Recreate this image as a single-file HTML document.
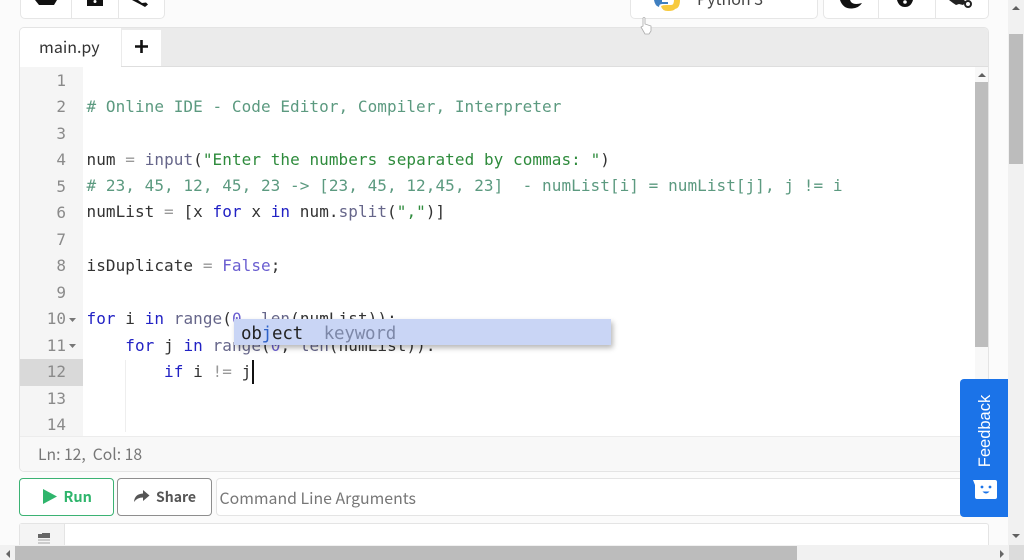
<!DOCTYPE html>
<html><head><meta charset="utf-8">
<style>
html,body{margin:0;padding:0;width:1024px;height:560px;overflow:hidden;background:#fbfbfb}
*{box-sizing:border-box}
.box{position:absolute;background:#fff;border:1px solid #e6e6e6;border-radius:5px}
.sans{font-family:"Noto Sans CJK JP","Liberation Sans",sans-serif}
.ln{position:absolute;width:46px;left:20px;text-align:right;font:16px/26px "DejaVu Sans Mono","Liberation Mono",monospace;color:#8a8a8a;letter-spacing:-.03px}
.cl{position:absolute;left:86.500px;white-space:pre;font:16px/26px "DejaVu Sans Mono","Liberation Mono",monospace;color:#333;letter-spacing:.06px}
.c{color:#5c9a80}.k{color:#2222c4}.s{color:#2e8b3c}.f{color:#66668a}.b{color:#6a5ed0}.o{color:#999}
</style></head><body>
<!-- top toolbar left -->
<div class="box" style="left:20px;top:-20px;width:145px;height:39px"></div>
<div style="position:absolute;left:71px;top:0;width:1px;height:18px;background:#e6e6e6"></div>
<div style="position:absolute;left:118px;top:0;width:1px;height:18px;background:#e6e6e6"></div>
<svg style="position:absolute;left:30px;top:0" width="130" height="10"><path d="M5 0H27L24 5H9Z" fill="#111"/><path d="M57 0H73V6H57Z" fill="#111"/><circle cx="65" cy="1.500" r="1.500" fill="#fff"/><path d="M102 0H108L112 3L116 2.500L118 4.500L115 7L111.500 5Z" fill="#111"/></svg>
<!-- top right -->
<div class="box" style="left:630px;top:-20px;width:188px;height:39px"></div>
<div class="sans" style="position:absolute;left:697px;top:-12px;font-size:16px;line-height:20px;color:#444">Python 3</div>
<svg style="position:absolute;left:654px;top:0" width="28" height="12"><path d="M0 0H8V2H14V4H8Q5 4 5 7Q1 6 0 0Z" fill="#3f7fc0"/><path d="M7 6Q9 5 12 5H17Q20 5 20 0H26Q26 8 21 9Q20 11 14 11Q8 11 7 6Z" fill="#f7ca3e"/></svg>
<div class="box" style="left:823px;top:-20px;width:166px;height:39px"></div>
<div style="position:absolute;left:878px;top:0;width:1px;height:18px;background:#e6e6e6"></div>
<div style="position:absolute;left:935px;top:0;width:1px;height:18px;background:#e6e6e6"></div>
<svg style="position:absolute;left:838px;top:0" width="140" height="12"><path d="M2 0Q5 9 14 8.500 21 8 24 3 14 6 12 0Z" fill="#111"/><path d="M59 0H75Q73 7 67 7 61 7 59 0Z" fill="#111"/><circle cx="67" cy="2" r="1.800" fill="#fff"/><path d="M111 0H126L128 2L125 5L121 4L118 5L115 3Z" fill="#222"/><circle cx="130" cy="4" r="3" fill="none" stroke="#222" stroke-width="2"/></svg>
<!-- scrollbar outer -->
<div style="position:absolute;left:1008px;top:0;width:16px;height:545px;background:#f1f1f1"></div>
<div style="position:absolute;left:1009px;top:34px;width:14px;height:130px;background:#bcbcbc"></div>
<svg style="position:absolute;left:1008px;top:3px" width="16" height="10"><path d="M4 7L8 3L12 7Z" fill="#606060"/></svg>
<svg style="position:absolute;left:1008px;top:531px" width="16" height="10"><path d="M4 3L8 7L12 3Z" fill="#606060"/></svg>
<!-- editor card -->
<div style="position:absolute;left:19px;top:27px;width:970px;height:445px;background:#fff;border:1px solid #e4e4e4;border-radius:5px;overflow:hidden">
  <div style="position:absolute;left:0;top:0;width:970px;height:39px;background:#ebebeb;border-bottom:1px solid #dedede"></div>
  <div style="position:absolute;left:0;top:0;width:101px;height:40px;background:#fff"></div>
  <div style="position:absolute;left:102px;top:2px;width:39px;height:36px;background:#fff"></div>
  <div style="position:absolute;left:0;top:39px;width:63px;height:369px;background:#f5f5f5"></div>
  <div style="position:absolute;left:0;top:331px;width:63px;height:27px;background:#d9d9d9"></div>
  <div style="position:absolute;left:0;top:408px;width:970px;height:37px;background:#f8f8f8;border-top:1px solid #ececec"></div>
  <div style="position:absolute;left:955px;top:39px;width:14px;height:369px;background:#f8f8f8"></div>
  <div style="position:absolute;left:955px;top:54px;width:13px;height:265px;background:#bdbdbd"></div>
  <svg style="position:absolute;left:954px;top:42px" width="16" height="10"><path d="M4 7L8 3L12 7Z" fill="#606060"/></svg>
</div>
<div class="sans" style="position:absolute;left:39px;top:35px;font-size:16px;line-height:22px;color:#333">main.py</div>
<svg style="position:absolute;left:134px;top:39px" width="15" height="15"><path d="M7.500 1V14M1 7.500H14" stroke="#111" stroke-width="2.600"/></svg>
<!-- gutter -->
<div class="ln" style="top:68px">1</div>
<div class="ln" style="top:94px">2</div>
<div class="ln" style="top:121px">3</div>
<div class="ln" style="top:147px">4</div>
<div class="ln" style="top:174px">5</div>
<div class="ln" style="top:200px">6</div>
<div class="ln" style="top:227px">7</div>
<div class="ln" style="top:253px">8</div>
<div class="ln" style="top:280px">9</div>
<div class="ln" style="top:306px">10</div>
<div class="ln" style="top:333px">11</div>
<div class="ln" style="top:359px">12</div>
<div class="ln" style="top:386px">13</div>
<div class="ln" style="top:412px">14</div>
<svg style="position:absolute;left:68px;top:316px" width="10" height="36"><path d="M1 2H8L4.500 6ZM1 28H8L4.500 32Z" fill="#777"/></svg>
<!-- code -->
<div class="cl c" style="top:94px"># Online IDE - Code Editor, Compiler, Interpreter</div>
<div class="cl" style="top:147px">num <span class="o">=</span> <span class="f">input</span>(<span class="s">"Enter the numbers separated by commas: "</span>)</div>
<div class="cl c" style="top:173px"># 23, 45, 12, 45, 23 -&gt; [23, 45, 12,45, 23]  - numList[i] = numList[j], j != i</div>
<div class="cl" style="top:199px">numList <span class="o">=</span> [x <span class="k">for</span> x <span class="k">in</span> num.<span class="f">split</span>(<span class="s">","</span>)]</div>
<div class="cl" style="top:253px">isDuplicate <span class="o">=</span> <span class="b">False</span>;</div>
<div class="cl" style="top:306px"><span class="k">for</span> i <span class="k">in</span> <span class="f">range</span>(<span class="b">0</span>, <span class="f">len</span>(numList)):</div>
<div class="cl" style="top:333px">    <span class="k">for</span> j <span class="k">in</span> <span class="f">range</span>(<span class="b">0</span>, <span class="f">len</span>(numList)):</div>
<div class="cl" style="top:359px">        <span class="k">if</span> i <span class="o">!=</span> j</div>
<div style="position:absolute;left:252px;top:360px;width:2px;height:24px;background:#111"></div>
<div style="position:absolute;left:125px;top:360px;width:1px;height:72px;background:#eee"></div>
<!-- autocomplete -->
<div style="position:absolute;left:234px;top:319px;width:377px;height:26px;background:#c9d5f5;box-shadow:2px 3px 5px rgba(0,0,0,.28)"></div>
<div style="position:absolute;left:241px;top:321px;white-space:pre;font:17.500px/26px 'DejaVu Sans Mono','Liberation Mono',monospace;color:#222;letter-spacing:-.2px">ob<span style="color:#2f62c8">j</span>ect  <span style="color:#7d88a8">keyword</span></div>
<!-- status -->
<div class="sans" style="position:absolute;left:38px;top:443px;font-size:15.700px;line-height:22px;color:#777">Ln: 12,&nbsp; Col: 18</div>
<!-- buttons -->
<div style="position:absolute;left:19px;top:478px;width:95px;height:38px;background:#fff;border:1px solid #3bb273;border-radius:4px"></div>
<svg style="position:absolute;left:42px;top:488px" width="15" height="17"><path d="M1 1V16L15 8.500Z" fill="#2fb56c"/></svg>
<div class="sans" style="position:absolute;left:63.500px;top:487px;font-size:14.500px;font-weight:700;line-height:20px;color:#2fb56c">Run</div>
<div style="position:absolute;left:117px;top:478px;width:95px;height:38px;background:#fff;border:1px solid #8e8e8e;border-radius:4px"></div>
<svg style="position:absolute;left:133px;top:489px" width="17" height="15"><path d="M10 1L16.500 6.500L10 12V8.500Q4 8.500 1 13Q1.500 5 10 4.500Z" fill="#555"/></svg>
<div class="sans" style="position:absolute;left:156px;top:487px;font-size:14px;font-weight:700;line-height:20px;color:#555">Share</div>
<div style="position:absolute;left:216px;top:478px;width:773px;height:38px;background:#fff;border:1px solid #e4e4e4;border-radius:4px"></div>
<div class="sans" style="position:absolute;left:219.500px;top:486px;font-size:15.850px;line-height:23px;color:#777">Command Line Arguments</div>
<!-- bottom panel -->
<div style="position:absolute;left:19px;top:523px;width:970px;height:30px;background:#fff;border:1px solid #e4e4e4;border-radius:3px"></div>
<div style="position:absolute;left:20px;top:524px;width:45px;height:22px;background:#f4f4f4;border-right:1px solid #e4e4e4"></div>
<svg style="position:absolute;left:36px;top:532px" width="16" height="14"><path d="M2 2H6V1H14V6H2Z" fill="#666"/><path d="M2 8H14M2 11H14" stroke="#ccc" stroke-width="2"/></svg>
<!-- feedback -->
<div style="position:absolute;left:960px;top:379px;width:48px;height:138px;background:#1b73e8;border-radius:4px 0 0 4px"></div>
<div style="position:absolute;left:985px;top:430.500px;transform:translate(-50%,-50%) rotate(-90deg);font:16.500px/20px 'Liberation Sans',sans-serif;color:#fff;white-space:nowrap">Feedback</div>
<svg style="position:absolute;left:971px;top:479px" width="27" height="22"><path d="M2 1H24Q26 1 26 3V18Q26 20 24 20H6Q4 20 4 18V6Z" fill="#fff"/><circle cx="11" cy="8" r="1.400" fill="#1b73e8"/><circle cx="19" cy="8" r="1.400" fill="#1b73e8"/><path d="M11.500 12.500Q15 16.500 18.500 12.500Z" fill="#1b73e8"/></svg>
<!-- bottom scrollbar -->
<div style="position:absolute;left:0;top:545px;width:1024px;height:15px;background:#f1f1f1"></div>
<div style="position:absolute;left:15px;top:546px;width:782px;height:14px;background:#bcbcbc"></div>
<svg style="position:absolute;left:2px;top:548px" width="12" height="12"><path d="M8 2L4 6L8 10Z" fill="#666"/></svg>
<svg style="position:absolute;left:996px;top:548px" width="12" height="12"><path d="M4 2L8 6L4 10Z" fill="#666"/></svg>
<div style="position:absolute;left:1009px;top:545px;width:15px;height:15px;background:#dcdcdc"></div>
<!-- cursor -->
<svg style="position:absolute;left:640px;top:16px" width="13" height="19"><path d="M3 2Q4 1 5 2V8L11 10V15L9 18H5L1 11L3 10Z" fill="#fff" stroke="#aaa" stroke-width=".8"/></svg>
</body></html>
